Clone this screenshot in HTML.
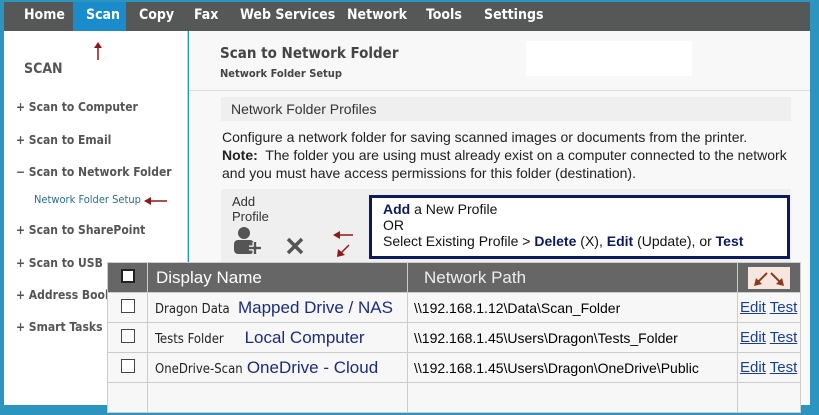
<!DOCTYPE html>
<html><head><style>
*{margin:0;padding:0;box-sizing:border-box}
body{width:819px;height:415px;background:#2b95c0;position:relative;overflow:hidden;font-family:"Liberation Sans",sans-serif}
.a{position:absolute}
.nav{left:4px;top:2px;width:806px;height:29px;background:#555857}
.nav span{position:absolute;top:5px;color:#fff;font-weight:bold;font-size:14px;font-family:"DejaVu Sans Condensed","Liberation Sans Narrow",sans-serif}
.side{left:4px;top:31px;width:184px;height:374px;background:#fff;border-right:1px solid #ccc}
.main{left:189px;top:31px;width:621px;height:374px;background:#f8f8f8}
.sl{position:absolute;left:12px;font-size:12px;font-weight:bold;color:#555;font-family:"DejaVu Sans Condensed",sans-serif}
.t{font-size:14px;color:#222}
table{border-collapse:collapse}
td{border:1px solid #ccc;height:30px;font-size:15px;background:#f7f7f7}
.cb{display:inline-block;width:14px;height:14px;border:1px solid #444;background:#fff}
.lk{color:#1a3f8a;text-decoration:underline}
.dn{font-family:"DejaVu Sans Condensed",sans-serif;font-size:13px;color:#222}
.lb{color:#1c2c7a;font-size:17px}
</style></head><body>
<div class="a nav">
<div class="a" style="left:69px;top:0;width:53px;height:29px;background:#1b8ccb"></div>
<span style="left:20px">Home</span><span style="left:82px">Scan</span><span style="left:135px">Copy</span><span style="left:190px">Fax</span><span style="left:236px">Web Services</span><span style="left:343px">Network</span><span style="left:422px">Tools</span><span style="left:480px">Settings</span>
</div>
<div class="a side">
<svg class="a" style="left:89px;top:10px" width="10" height="20"><path d="M5 19V3" stroke="#8b1a1a" stroke-width="1.5"/><path d="M1 7L5 1L9 7Z" fill="#8b1a1a"/></svg>
<div class="sl" style="left:20px;top:30px;font-size:14px">SCAN</div>
<div class="sl" style="top:69px">+ Scan to Computer</div>
<div class="sl" style="top:102px">+ Scan to Email</div>
<div class="sl" style="top:134px">− Scan to Network Folder</div>
<div class="sl" style="left:30px;top:162px;font-weight:normal;color:#2a6e8a;font-size:11px">Network Folder Setup</div>
<svg class="a" style="left:140px;top:165px" width="24" height="10"><path d="M6 5H23" stroke="#8b1a1a" stroke-width="1.5"/><path d="M0 5L7 1V9Z" fill="#8b1a1a"/></svg>
<div class="sl" style="top:192px">+ Scan to SharePoint</div>
<div class="sl" style="top:225px">+ Scan to USB</div>
<div class="sl" style="top:257px">+ Address Book</div>
<div class="sl" style="top:289px">+ Smart Tasks</div>
</div>
<div class="a main">
<div class="a" style="left:31px;top:13px;font-size:15px;font-weight:bold;color:#444;font-family:'DejaVu Sans Condensed',sans-serif">Scan to Network Folder</div>
<div class="a" style="left:31px;top:36px;font-size:11px;font-weight:bold;color:#444;font-family:'DejaVu Sans Condensed',sans-serif">Network Folder Setup</div>
<div class="a" style="left:337px;top:10px;width:166px;height:35px;background:#fff"></div>
<div class="a" style="left:0;top:59px;width:621px;height:1px;background:#ddd"></div>
<div class="a" style="left:32px;top:66px;width:570px;height:24px;background:#efefef"></div>
<div class="a t" style="left:42px;top:70px;color:#333">Network Folder Profiles</div>
<div class="a t" style="left:33px;top:97px;line-height:18px;width:590px">Configure a network folder for saving scanned images or documents from the printer.<br><b>Note:</b>&nbsp; The folder you are using must already exist on a computer connected to the network and you must have access permissions for this folder (destination).</div>
<div class="a" style="left:32px;top:158px;width:570px;height:75px;background:#efefef"></div>
<div class="a" style="left:43px;top:163px;font-size:13px;line-height:15px;color:#333">Add<br>Profile</div>
<svg class="a" style="left:43px;top:195px" width="36" height="30"><circle cx="12" cy="7" r="6" fill="#555"/><rect x="2" y="14" width="20" height="14" rx="4" fill="#555"/><path d="M17 22h12M23 16v12" stroke="#fff" stroke-width="5"/><path d="M17 22h12M23 16v12" stroke="#555" stroke-width="2.5"/></svg>
<svg class="a" style="left:97px;top:206px" width="18" height="18"><path d="M2 2L16 16M16 2L2 16" stroke="#555" stroke-width="3.5"/></svg>
<svg class="a" style="left:142px;top:198px" width="24" height="30"><path d="M8 6H22" stroke="#8b1a1a" stroke-width="1.5"/><path d="M2 6L9 2V10Z" fill="#8b1a1a"/><path d="M18 16L9 25" stroke="#8b1a1a" stroke-width="1.5"/><path d="M6 28L7 20L14 26Z" fill="#8b1a1a"/></svg>
<div class="a" style="left:180px;top:164px;width:421px;height:64px;background:#fff;border:3px solid #0f1a5a;padding:3px 11px;font-size:14px;line-height:16px;color:#111">
<b style="color:#0f1a5a">Add</b> a New Profile<br>OR<br>Select Existing Profile &gt; <b style="color:#0f1a5a">Delete</b> (X), <b style="color:#0f1a5a">Edit</b> (Update), or <b style="color:#0f1a5a">Test</b></div>
</div>
<table class="a" style="left:107px;top:262px;width:694px">
<tr style="background:#666"><td style="width:40px;background:#666;text-align:center"><span class="cb" style="border:2px solid #222"></span></td><td style="width:260px;background:#666;color:#fff;padding-left:8px;font-size:17px">Display Name</td><td style="width:330px;background:#666;color:#eee;padding-left:16px;font-size:17px">Network Path</td><td style="background:#666;text-align:center"><svg width="42" height="22" style="vertical-align:middle;background:#f6e6e0"><path d="M19 6L9 16M23 6L33 16" stroke="#8b3a1a" stroke-width="2"/><path d="M6 19L8 11L14 17Z M36 19L34 11L28 17Z" fill="#8b3a1a"/></svg></td></tr>
<tr><td style="text-align:center"><span class="cb"></span></td><td style="padding-left:7px"><span class="dn">Dragon Data</span> &nbsp;<span class="lb">Mapped Drive / NAS</span></td><td style="padding-left:6px;font-size:14px">\\192.168.1.12\Data\Scan_Folder</td><td style="padding-left:2px"><span class="lk">Edit</span> <span class="lk">Test</span></td></tr>
<tr><td style="text-align:center"><span class="cb"></span></td><td style="padding-left:7px"><span class="dn">Tests Folder</span> &nbsp;&nbsp;&nbsp;&nbsp;<span class="lb">Local Computer</span></td><td style="padding-left:6px;font-size:14px">\\192.168.1.45\Users\Dragon\Tests_Folder</td><td style="padding-left:2px"><span class="lk">Edit</span> <span class="lk">Test</span></td></tr>
<tr><td style="text-align:center;height:26px"><span class="cb"></span></td><td style="padding-left:7px"><span class="dn">OneDrive-Scan</span> <span class="lb">OneDrive - Cloud</span></td><td style="padding-left:6px;font-size:14px">\\192.168.1.45\Users\Dragon\OneDrive\Public</td><td style="padding-left:2px"><span class="lk">Edit</span> <span class="lk">Test</span></td></tr>
<tr><td style="height:28px"></td><td></td><td></td><td></td></tr>
</table>
</body></html>
